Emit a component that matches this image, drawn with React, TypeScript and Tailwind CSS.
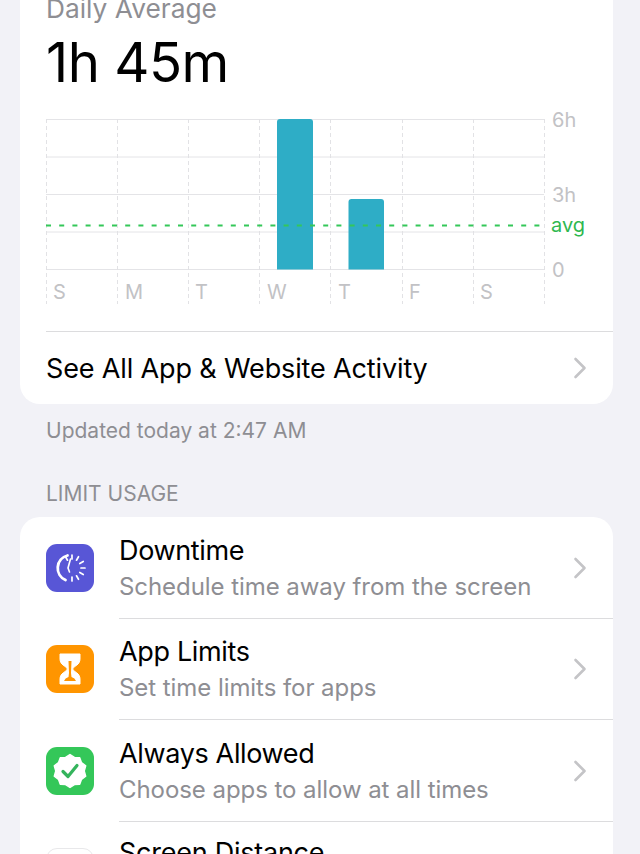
const grid = [46, 117, 188, 259, 330, 402, 473, 544];
const hLines = [119.5, 157, 194.5, 232, 269.5];
const days = [["S", 53], ["M", 125], ["T", 195], ["W", 267], ["T", 338], ["F", 409], ["S", 480]] as const;

function Chevron() {
  return (
    <svg width="14" height="22" viewBox="0 0 14 22" fill="none" className="shrink-0">
      <path d="M2.5 2 L11.5 11 L2.5 20" stroke="#c4c4c7" strokeWidth="2.6" strokeLinecap="round" strokeLinejoin="round" />
    </svg>
  );
}

function Chart() {
  return (
    <svg width="640" height="210" viewBox="0 100 640 210" className="block -ml-5" style={{ fontFamily: "Inter, sans-serif" }}>
      {hLines.map((y) => (
        <line key={y} x1="46" x2="544" y1={y} y2={y} stroke="#e4e4e7" strokeWidth="1" />
      ))}
      {grid.map((x) => (
        <line key={x} x1={x + 0.5} x2={x + 0.5} y1="119" y2="304" stroke="#e2e2e5" strokeWidth="1" strokeDasharray="4 3" />
      ))}
      <path d="M277 269.5 V122 a3 3 0 0 1 3 -3 H310 a3 3 0 0 1 3 3 V269.5 Z" fill="#2eadc6" />
      <path d="M348.500 269.500 V202 a3 3 0 0 1 3 -3 H381 a3 3 0 0 1 3 3 V269.500 Z" fill="#2eadc6" />
      <line x1="46" x2="544" y1="225.500" y2="225.500" stroke="#34c759" strokeWidth="2" strokeDasharray="5 8.200" />
      <g fontSize="20" fill="#c2c2c5">
        <text x="552" y="127">6h</text>
        <text x="552" y="202">3h</text>
        <text x="552" y="277">0</text>
        {days.map(([d, x], i) => (
          <text key={i} x={x} y="299" fontSize="20">{d}</text>
        ))}
      </g>
      <text x="551" y="232" fontSize="20" fill="#2fb84f">avg</text>
    </svg>
  );
}

function DowntimeIcon() {
  const ticks = [-60, -30, 0, 30, 60, 90, 120, 150];
  return (
    <svg viewBox="0 0 48 48" className="w-full h-full">
      <rect width="48" height="48" rx="11" fill="#5856d6" />
      <path d="M21.500 11.500 A13 13 0 0 0 19.500 36" stroke="#fff" strokeWidth="2.800" fill="none" strokeLinecap="round" />
      <path d="M24.500 15 L22 24 L23.500 28" stroke="#fff" strokeWidth="1.600" fill="none" strokeLinecap="round" />
      {ticks.map((a) => (
        <line key={a} x1="26" x2="26" y1="11" y2="15" transform={`rotate(${a + 30} 26 24)`} stroke="#fff" strokeWidth="1.700" strokeLinecap="round" />
      ))}
    </svg>
  );
}

function LimitsIcon() {
  return (
    <svg viewBox="0 0 48 48" className="w-full h-full">
      <rect width="48" height="48" rx="11" fill="#ff9500" />
      <path d="M14 9 H34 V14 C34 20 28 21 26.500 24 C28 27 34 28 34 34 V39 H14 V34 C14 28 20 27 21.500 24 C20 21 14 20 14 14 Z" fill="#fff" stroke="#fff" strokeWidth="1" strokeLinejoin="round" />
      <path d="M22.500 16 H25.500 L25 28 L25.500 32 Q29 33 30 36 H18 Q19 33 22.500 32 L23 28 Z" fill="#ff9500" />
    </svg>
  );
}

function AllowedIcon() {
  const pts: string[] = [];
  for (let i = 0; i < 20; i++) {
    const a = (i * Math.PI) / 10 - Math.PI / 2;
    const r = i % 2 === 0 ? 16.500 : 14.200;
    pts.push(`${(24 + r * Math.cos(a)).toFixed(2)},${(24 + r * Math.sin(a)).toFixed(2)}`);
  }
  return (
    <svg viewBox="0 0 48 48" className="w-full h-full">
      <rect width="48" height="48" rx="11" fill="#34c759" />
      <polygon points={pts.join(" ")} fill="#fff" stroke="#fff" strokeWidth="1.500" strokeLinejoin="round" />
      <path d="M17 24.500 L22 29.500 L31 18.500" stroke="#34b45c" strokeWidth="3.200" fill="none" strokeLinecap="round" strokeLinejoin="round" />
    </svg>
  );
}

function Row({ icon, title, sub }: { icon: React.ReactNode; title: string; sub?: string }) {
  return (
    <div className="flex items-center h-[101.500px]">
      <div className="w-[48px] h-[48px] ml-[26px] mr-[25px] shrink-0">{icon}</div>
      <div className="flex-1 flex items-center h-full border-b border-[#dcdcde]">
        <div className="flex-1 pt-[2px]">
          <div className="text-[27px] leading-[36px] text-black tracking-[-0.35px]">{title}</div>
          {sub && <div className="text-[24px] leading-[35px] text-[#8e8e93] tracking-[-0.06px]">{sub}</div>}
        </div>
        <div className="mr-[26px] pt-[1px]"><Chevron /></div>
      </div>
    </div>
  );
}

export default function App() {
  return (
    <div className="w-[640px] h-[854px] overflow-hidden bg-[#f2f2f7]" style={{ fontFamily: "Inter, sans-serif" }}>
      <div className="ml-5 w-[593px] mt-[-30px] bg-white rounded-b-[20px]">
        <div className="pl-[26px] text-[26.300px] leading-[34px] pt-[22px] text-[#8e8e93]">Daily Average</div>
        <div className="pl-[26px] mt-[5px] mb-[7px] text-[54.500px] leading-[62px] text-black tracking-[-0.5px]">1h 45m</div>
        <Chart />
        <div className="ml-[26px] mt-[21px] border-t border-[#dcdcde] h-[73px] flex items-center justify-between pr-[26px]">
          <span className="text-[27px] text-black tracking-[-0.14px] pt-[2px]">See All App &amp; Website Activity</span>
          <Chevron />
        </div>
      </div>
      <div className="pl-[46px] mt-[12px] text-[21px] leading-[30px] text-[#8e8e93]">Updated today at 2:47 AM</div>
      <div className="pl-[46px] mt-[33px] text-[21px] leading-[30px] text-[#8e8e93]">LIMIT USAGE</div>
      <div className="ml-5 w-[593px] mt-[8px] bg-white rounded-[20px]">
        <Row icon={<DowntimeIcon />} title="Downtime" sub="Schedule time away from the screen" />
        <Row icon={<LimitsIcon />} title="App Limits" sub="Set time limits for apps" />
        <Row icon={<AllowedIcon />} title="Always Allowed" sub="Choose apps to allow at all times" />
        <div className="flex items-start h-[101px]">
          <div className="w-[48px] h-[48px] ml-[26px] mr-[25px] mt-[26px] shrink-0 rounded-[11px] bg-white border border-[#e8e8ea]" />
          <div className="text-[27px] leading-[36px] pt-[13px] text-black tracking-[-0.25px]">Screen Distance</div>
        </div>
      </div>
    </div>
  );
}
